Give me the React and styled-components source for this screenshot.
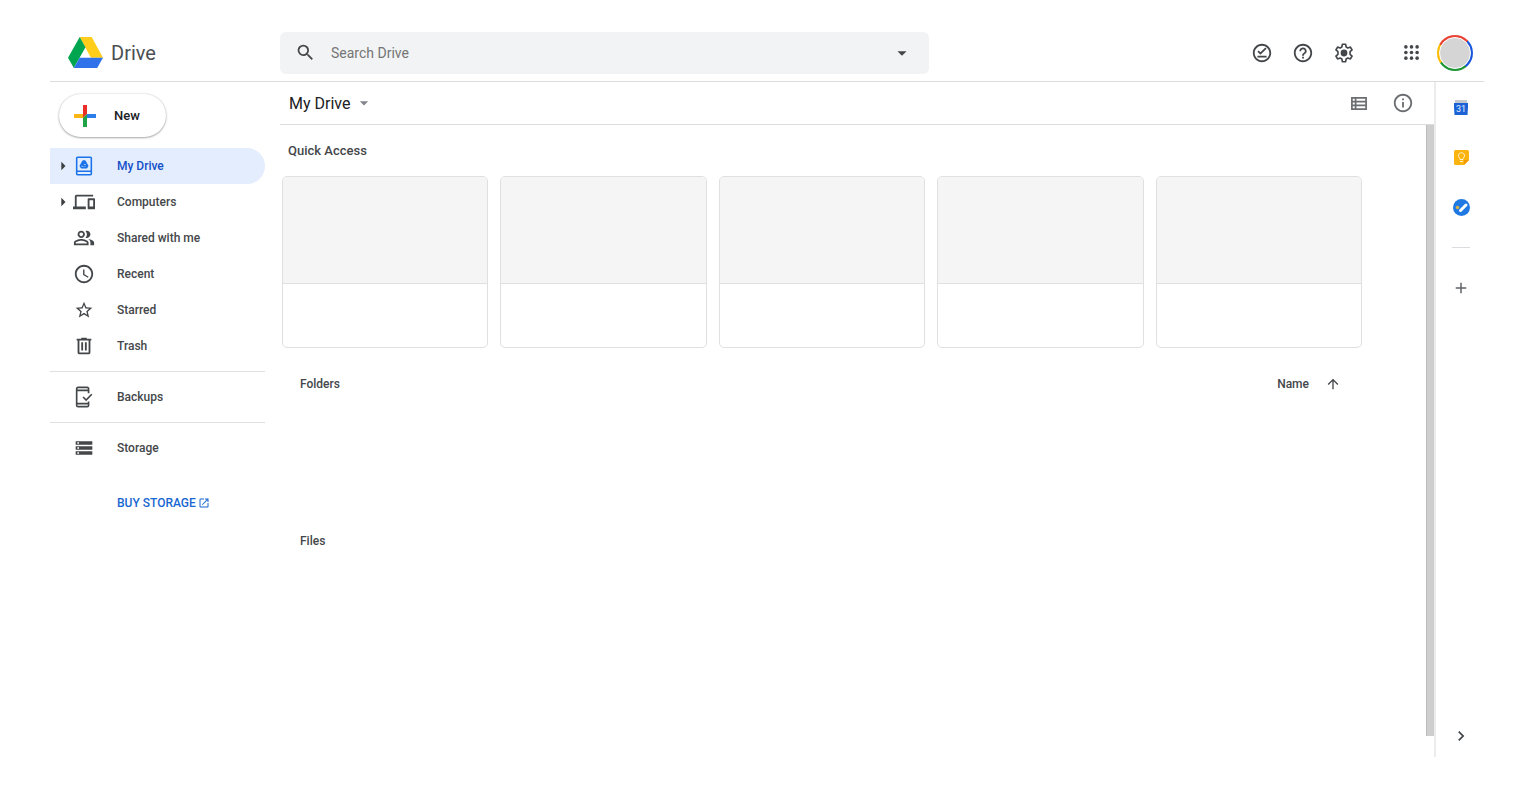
import React from "react";
import styled, { createGlobalStyle } from "styled-components";
import {
  MdAccessTime,
  MdAdd,
  MdArrowDropDown,
  MdArrowRight,
  MdArrowUpward,
  MdChevronRight,
  MdHelpOutline,
  MdInfoOutline,
  MdOpenInNew,
  MdOutlineDevices,
  MdOutlineOfflinePin,
  MdOutlinePeopleAlt,
  MdSearch,
  MdStarBorder,
  MdStorage,
} from "react-icons/md";

const GlobalStyle = createGlobalStyle`
    * {
        box-sizing: border-box;
    }

    body {
        margin: 0;
        background: #fff;
        color: #44474a;
        font-family: Roboto, "Liberation Sans", sans-serif;
        font-size: 12px;
    }

    button, input {
        font-family: inherit;
    }
`

const Page = styled.div`
    display: flex;
    flex-direction: column;
    min-height: 100vh;
    padding: 24px 52px 28px 50px;
`

const Header = styled.header`
    display: flex;
    align-items: center;
    height: 58px;
    border-bottom: 1px solid #dadce0;
`

const Brand = styled.a`
    display: flex;
    align-items: center;
    gap: 8px;
    flex: 0 0 230px;
    padding-left: 18px;
    color: #4c4f52;
    font-size: 20px;
    text-decoration: none;
`

const SearchBar = styled.form`
    display: flex;
    align-items: center;
    flex: 0 1 649px;
    height: 42px;
    padding: 0 15px 0 13px;
    border-radius: 6px;
    background: #f1f3f4;
    color: #3c4043;
`

const SearchInput = styled.input`
    flex: 1;
    min-width: 0;
    border: 0;
    padding: 0 4px;
    background: transparent;
    font-size: 14px;
    color: #3c4043;

    &::placeholder {
        color: #757575;
        opacity: 1;
    }
`

const IconButton = styled.button`
    display: flex;
    align-items: center;
    justify-content: center;
    width: ${props => props.$size || 24}px;
    height: ${props => props.$size || 24}px;
    padding: 0;
    border: 0;
    background: transparent;
    color: ${props => props.$color || "#44474a"};
    cursor: pointer;
`

const SearchButton = styled(IconButton)`
    margin-right: 10px;
`

const HeaderActions = styled.div`
    display: flex;
    align-items: center;
    gap: 11px;
    margin-left: auto;
    padding-right: 11px;
`

const AppsButton = styled(IconButton)`
    margin-left: 26px;
`

const Avatar = styled.button`
    width: 36px;
    height: 36px;
    padding: 2px;
    border: 0;
    border-radius: 50%;
    background: conic-gradient(#ea4335 0 45deg, #1a56db 45deg 140deg, #1e9636 140deg 235deg, #fbbc04 235deg 300deg, #ea4335 300deg);
    cursor: pointer;
`

const AvatarFace = styled.span`
    display: block;
    height: 100%;
    border: 1px solid #fff;
    border-radius: 50%;
    background: #d5d5d5;
`

const Body = styled.div`
    display: flex;
    flex: 1;
`

const Sidebar = styled.aside`
    flex: 0 0 230px;
    padding: 12px 15px 0 0;
`

const NewButton = styled.button`
    display: flex;
    align-items: center;
    gap: 18px;
    height: 43px;
    margin: 0 0 11px 9px;
    padding: 0 26px 0 15px;
    border: 0;
    border-radius: 22px;
    background: #fff;
    box-shadow: 0 1px 2px rgba(60, 64, 67, 0.4), 0 0 2px rgba(60, 64, 67, 0.25);
    color: #202124;
    font-size: 13px;
    font-weight: 500;
    cursor: pointer;
`

const NavItem = styled.a`
    display: flex;
    align-items: center;
    height: 36px;
    border-radius: 0 18px 18px 0;
    background: ${props => props.$active ? "#e4edfd" : "transparent"};
    color: ${props => props.$active ? "#1450c8" : "#44474a"};
    font-weight: 500;
    text-decoration: none;
`

const Arrow = styled.span`
    display: flex;
    justify-content: flex-end;
    width: 23px;
    color: #3c4043;
`

const NavIcon = styled.span`
    display: flex;
    justify-content: center;
    width: 22px;
    margin-right: 22px;
    color: ${props => props.$active ? "#1a73e8" : "#44474a"};
`

const Divider = styled.hr`
    height: 1px;
    margin: 7px 0;
    border: 0;
    background: #e0e0e0;
`

const BuyLink = styled.a`
    display: inline-flex;
    align-items: center;
    gap: 2px;
    margin: 30px 0 0 67px;
    color: #1967d2;
    font-weight: 500;
    text-decoration: none;
`

const Main = styled.main`
    display: flex;
    flex-direction: column;
    flex: 1;
    min-width: 0;
`

const Toolbar = styled.div`
    display: flex;
    align-items: center;
    gap: 20px;
    height: 43px;
    padding: 0 19px 0 9px;
    border-bottom: 1px solid #dadce0;
`

const PathButton = styled.button`
    display: flex;
    align-items: center;
    gap: 4px;
    margin-right: auto;
    padding: 0;
    border: 0;
    background: transparent;
    color: #202124;
    font-size: 16px;
    cursor: pointer;

    svg {
        color: #80868b;
    }
`

const Scroller = styled.div`
    display: flex;
    flex: 1;
    padding-bottom: 21px;
`

const Content = styled.div`
    flex: 1;
    min-width: 0;
    padding: 16px 64px 0 2px;
`

const ScrollThumb = styled.div`
    width: 8px;
    border-left: 1px solid #bdbdbd;
    background: #cecece;
`

const Title = styled.h2`
    margin: 0 6px 15px;
    font-size: 13px;
    font-weight: 500;
    line-height: 20px;
`

const Cards = styled.div`
    display: grid;
    grid-template-columns: repeat(5, 1fr);
    gap: 12px;
`

const Card = styled.article`
    height: 172px;
    border: 1px solid #e0e0e0;
    border-radius: 5px;
    overflow: hidden;
`

const Preview = styled.div`
    height: 107px;
    border-bottom: 1px solid #e0e0e0;
    background: #f5f5f5;
`

const Section = styled.section`
    display: flex;
    align-items: center;
    justify-content: space-between;
    height: 24px;
    margin-top: ${props => props.$top}px;
    padding: 0 21px 0 18px;
`

const SectionTitle = styled.h3`
    margin: 0;
    font-size: 12px;
    font-weight: 500;
`

const SortButton = styled.button`
    display: flex;
    align-items: center;
    gap: 16px;
    padding: 0;
    border: 0;
    background: transparent;
    color: #44474a;
    font-size: 12px;
    font-weight: 500;
    cursor: pointer;
`

const Rail = styled.aside`
    display: flex;
    flex-direction: column;
    align-items: center;
    gap: 26px;
    flex: 0 0 50px;
    padding: 13px 0 9px 2px;
    border-left: 2px solid #ececec;
`

const RailLine = styled.hr`
    width: 18px;
    height: 1px;
    margin: 2px 0;
    border: 0;
    background: #dadce0;
`

const RailToggle = styled(IconButton)`
    margin-top: auto;
`

function DriveLogo() {
  return (
    <svg width="35" height="31" viewBox="0 0 102 90">
      <path fill="#ffcd1a" d="M34 0h35l33 60H67z" />
      <path fill="#00a54f" d="M34 0l17 30-34 60L0 60z" />
      <path fill="#2f72ea" d="M34 60h68L85 90H17z" />
    </svg>
  )
}

function PlusLogo() {
  return (
    <svg width="22" height="22" viewBox="0 0 22 22">
      <path fill="#ea2f28" d="M9 0h4v9l-4 4z" />
      <path fill="#fbb616" d="M0 9h9v4H0z" />
      <path fill="#2b7de9" d="M13 9h9v4h-9z" />
      <path fill="#1fa347" d="M9 13l4-4v13H9z" />
    </svg>
  )
}

function MyDriveIcon() {
  return (
    <svg width="22" height="22" viewBox="0 0 24 24" fill="none" stroke="currentColor" strokeWidth="1.7">
      <path d="M5 2.500h14q1 0 1 1v17q0 1-1 1H5q-1 0-1-1v-17q0-1 1-1zM4 17.800h16" />
      <path strokeWidth="1.900" strokeLinejoin="round" d="M11 6.800h2l2.900 5-1.100 2H9.200l-1.100-2zM13 6.800l-2.900 5M10.500 11.500h5" />
    </svg>
  )
}

function TrashIcon() {
  return (
    <svg width="22" height="22" viewBox="0 0 24 24" fill="currentColor">
      <path d="M15 4V3H9v1H4v2h1v13c0 1.100.9 2 2 2h10c1.100 0 2-.9 2-2V6h1V4h-5zm2 15H7V6h10v13zM9 8h2v9H9zm4 0h2v9h-2z" />
    </svg>
  )
}

function BackupIcon() {
  return (
    <svg width="22" height="22" viewBox="0 0 24 24" fill="none" stroke="currentColor" strokeWidth="1.800">
      <path d="M17 8V3Q17 1.500 15.500 1.500h-10Q4 1.500 4 3v18q0 1.500 1.500 1.500h10q1.500 0 1.500-1.500v-4M4 4.800h13M4 19.200h13M11 12l3.300 3.300L20.500 9" />
    </svg>
  )
}

function GearIcon() {
  return (
    <svg width="22" height="22" viewBox="0 0 24 24" fill="none" stroke="currentColor" strokeWidth="1.800" strokeLinejoin="round">
      <path d="M10.200 2.500h3.600l.5 2.900 1.900 1.100 2.800-1 1.800 3.200-2.200 1.900v2.800l2.200 1.900-1.800 3.200-2.800-1-1.900 1.100-.5 2.900h-3.600l-.5-2.900-1.900-1.100-2.800 1-1.800-3.200 2.200-1.900v-2.800L3.200 8.700 5 5.500l2.800 1 1.900-1.100z" />
      <circle cx="12" cy="12" r="3.700" fill="currentColor" stroke="none" />
    </svg>
  )
}

function AppsIcon() {
  const spots = [2, 8, 14]
  return (
    <svg width="15" height="15" viewBox="0 0 16 16" fill="currentColor">
      {spots.map(y => spots.map(x => <circle key={x + "-" + y} cx={x} cy={y} r="1.900" />))}
    </svg>
  )
}

function ListIcon() {
  return (
    <svg width="16" height="13" viewBox="0 0 16 13" fill="none" stroke="currentColor" strokeWidth="1.700">
      <path d="M.9.900h14.200v11.200H.900zM1 4.600h14M1 8.400h14M4.600 1v11" />
    </svg>
  )
}

function CalendarIcon() {
  return (
    <svg width="14" height="15" viewBox="0 0 14 15">
      <path fill="#c4c7cc" d="M1 0h12v4H1z" />
      <path fill="#1a62d6" d="M0 3h14v4l-.5 8H.5L0 7z" />
      <text x="7" y="12" textAnchor="middle" fill="#e8f0fe" fontSize="9" fontFamily="Roboto, sans-serif">31</text>
    </svg>
  )
}

function KeepIcon() {
  return (
    <svg width="15" height="15" viewBox="0 0 15 15">
      <path fill="#fbb40d" d="M1.500 0h12Q15 0 15 1.500V10l-5 5H1.500Q0 15 0 13.500v-12Q0 0 1.500 0z" />
      <path fill="#f29900" d="M10 10h5l-5 5z" />
      <path fill="none" stroke="#fff3cf" d="M6 9.500V8.300a3 3 0 1 1 3 0v1.200zM6 11.500h3" />
    </svg>
  )
}

function TasksIcon() {
  return (
    <svg width="17" height="17" viewBox="0 0 17 17">
      <circle cx="8.500" cy="8.500" r="8.500" fill="#2079e3" />
      <path fill="none" stroke="#fff" strokeWidth="3" strokeLinecap="round" d="M7.500 11.500L13 6" />
      <circle cx="4.500" cy="8.500" r="1.800" fill="#d5b04c" />
    </svg>
  )
}

const navLinks = [
  { label: "My Drive", icon: <MyDriveIcon />, arrow: true, active: true },
  { label: "Computers", icon: <MdOutlineDevices size={22} />, arrow: true },
  { label: "Shared with me", icon: <MdOutlinePeopleAlt size={22} /> },
  { label: "Recent", icon: <MdAccessTime size={22} /> },
  { label: "Starred", icon: <MdStarBorder size={20} /> },
  { label: "Trash", icon: <TrashIcon /> },
]

function NavLink({ label, icon, arrow, active }) {
  return (
    <NavItem href="#" $active={active} aria-current={active ? "page" : undefined}>
      <Arrow>{arrow && <MdArrowRight size={20} />}</Arrow>
      <NavIcon $active={active}>{icon}</NavIcon>
      {label}
    </NavItem>
  )
}

export default function App() {
  return (
    <>
      <GlobalStyle />
      <Page>
        <Header>
          <Brand href="#">
            <DriveLogo />
            Drive
          </Brand>
          <SearchBar role="search" onSubmit={e => e.preventDefault()}>
            <SearchButton aria-label="Search"><MdSearch size={21} /></SearchButton>
            <SearchInput type="text" aria-label="Search Drive" placeholder="Search Drive" />
            <IconButton type="button" aria-label="Search options"><MdArrowDropDown size={22} /></IconButton>
          </SearchBar>
          <HeaderActions>
            <IconButton $size={30} aria-label="Offline"><MdOutlineOfflinePin size={22} /></IconButton>
            <IconButton $size={30} aria-label="Help"><MdHelpOutline size={22} /></IconButton>
            <IconButton $size={30} aria-label="Settings"><GearIcon /></IconButton>
            <AppsButton $size={30} aria-label="Apps"><AppsIcon /></AppsButton>
            <Avatar aria-label="Account"><AvatarFace /></Avatar>
          </HeaderActions>
        </Header>
        <Body>
          <Sidebar>
            <NewButton>
              <PlusLogo />
              New
            </NewButton>
            <nav>
              {navLinks.map(link => <NavLink key={link.label} {...link} />)}
              <Divider />
              <NavLink label="Backups" icon={<BackupIcon />} />
              <Divider />
              <NavLink label="Storage" icon={<MdStorage size={20} />} />
            </nav>
            <BuyLink href="#">
              BUY STORAGE
              <MdOpenInNew size={12} />
            </BuyLink>
          </Sidebar>
          <Main>
            <Toolbar>
              <PathButton>
                My Drive
                <MdArrowDropDown size={20} />
              </PathButton>
              <IconButton $color="#6b6e71" aria-label="List view"><ListIcon /></IconButton>
              <IconButton $color="#6b6e71" aria-label="View details"><MdInfoOutline size={22} /></IconButton>
            </Toolbar>
            <Scroller>
              <Content>
                <Title>Quick Access</Title>
                <Cards>
                  {[1, 2, 3, 4, 5].map(n => <Card key={n}><Preview /></Card>)}
                </Cards>
                <Section $top={24}>
                  <SectionTitle>Folders</SectionTitle>
                  <SortButton>
                    Name
                    <MdArrowUpward size={16} />
                  </SortButton>
                </Section>
                <Section $top={133}>
                  <SectionTitle>Files</SectionTitle>
                </Section>
              </Content>
              <ScrollThumb />
            </Scroller>
          </Main>
          <Rail>
            <IconButton aria-label="Calendar"><CalendarIcon /></IconButton>
            <IconButton aria-label="Keep"><KeepIcon /></IconButton>
            <IconButton aria-label="Tasks"><TasksIcon /></IconButton>
            <RailLine />
            <IconButton aria-label="Get add-ons" $color="#5f6368"><MdAdd size={18} /></IconButton>
            <RailToggle aria-label="Hide side panel"><MdChevronRight size={20} /></RailToggle>
          </Rail>
        </Body>
      </Page>
    </>
  )
}
